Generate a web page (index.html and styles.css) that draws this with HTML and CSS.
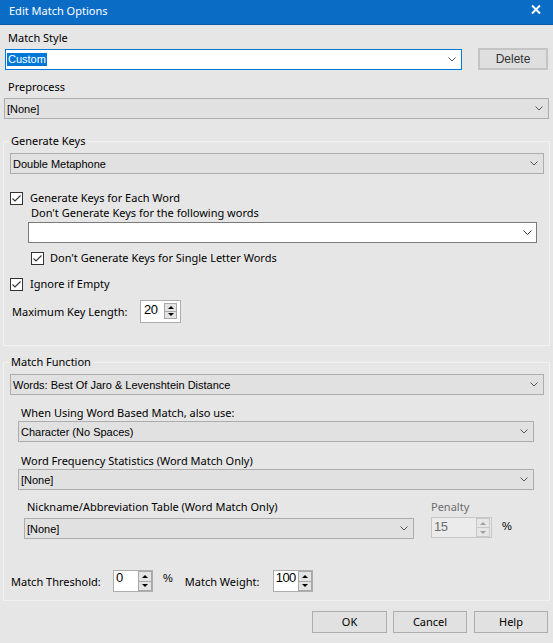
FILE: index.html
```html
<!DOCTYPE html>
<html>
<head>
<meta charset="utf-8">
<title>Edit Match Options</title>
<link rel="stylesheet" href="styles.css">
</head>
<body>
<div class="titlebar">
  <span class="title">Edit Match Options</span>
  <span class="close"><svg width="10" height="9" viewBox="0 0 10 9"><path d="M1 0.5 L9 8.5 M9 0.5 L1 8.5" stroke="#fff" stroke-width="2" fill="none"/></svg></span>
</div>

<div class="lbl lbl-style">Match Style</div>
<div class="style-row">
  <div class="combo combo-custom"><span class="sel-text">Custom</span><span class="chev"><svg width="8" height="5" viewBox="0 0 8 5"><path d="M0.5 0.5 L4 4 L7.5 0.5" fill="none" stroke="#555"/></svg></span></div>
  <div class="btn btn-delete">Delete</div>
</div>

<div class="lbl lbl-pre">Preprocess</div>
<div class="select sel-pre"><span>[None]</span><span class="chev"><svg width="8" height="5" viewBox="0 0 8 5"><path d="M0.5 0.5 L4 4 L7.5 0.5" fill="none" stroke="#555"/></svg></span></div>

<fieldset class="grp grp-keys">
  <legend>Generate Keys</legend>
  <div class="select sel-wide"><span>Double Metaphone</span><span class="chev"><svg width="8" height="5" viewBox="0 0 8 5"><path d="M0.5 0.5 L4 4 L7.5 0.5" fill="none" stroke="#555"/></svg></span></div>

  <div class="cb cb-each"><span class="box"><svg width="11" height="11" viewBox="0 0 11 11"><path d="M1.5 5.5 L4 8 L9.5 2.5" fill="none" stroke="#333" stroke-width="1.1"/></svg></span><span>Generate Keys for Each Word</span></div>
  <div class="lbl lbl-dont">Don't Generate Keys for the following words</div>
  <div class="combo combo-words"><span></span><span class="chev"><svg width="9" height="5" viewBox="0 0 9 5"><path d="M0.5 0.5 L4.5 4.5 L8.5 0.5" fill="none" stroke="#333"/></svg></span></div>
  <div class="cb cb-single"><span class="box"><svg width="11" height="11" viewBox="0 0 11 11"><path d="M1.5 5.5 L4 8 L9.5 2.5" fill="none" stroke="#333" stroke-width="1.1"/></svg></span><span>Don't Generate Keys for Single Letter Words</span></div>
  <div class="cb cb-empty"><span class="box"><svg width="11" height="11" viewBox="0 0 11 11"><path d="M1.5 5.5 L4 8 L9.5 2.5" fill="none" stroke="#333" stroke-width="1.1"/></svg></span><span>Ignore if Empty</span></div>

  <div class="num-row row-maxkey">
    <span class="lbl num-lbl lbl-maxkey">Maximum Key Length:</span>
    <div class="spin spin-maxkey"><span class="spin-val">20</span><span class="arrows"><span class="arr"><i class="tri-up"></i></span><span class="arr"><i class="tri-dn"></i></span></span></div>
  </div>
</fieldset>

<fieldset class="grp grp-match">
  <legend>Match Function</legend>
  <div class="select sel-wide"><span>Words: Best Of Jaro &amp; Levenshtein Distance</span><span class="chev"><svg width="8" height="5" viewBox="0 0 8 5"><path d="M0.5 0.5 L4 4 L7.5 0.5" fill="none" stroke="#555"/></svg></span></div>

  <div class="lbl lbl-sub lbl-when">When Using Word Based Match, also use:</div>
  <div class="select sel-sub"><span>Character (No Spaces)</span><span class="chev"><svg width="8" height="5" viewBox="0 0 8 5"><path d="M0.5 0.5 L4 4 L7.5 0.5" fill="none" stroke="#555"/></svg></span></div>

  <div class="lbl lbl-sub lbl-freq">Word Frequency Statistics (Word Match Only)</div>
  <div class="select sel-sub"><span>[None]</span><span class="chev"><svg width="8" height="5" viewBox="0 0 8 5"><path d="M0.5 0.5 L4 4 L7.5 0.5" fill="none" stroke="#555"/></svg></span></div>

  <div class="nick-row">
    <div class="nick-col">
      <div class="lbl lbl-nick">Nickname/Abbreviation Table (Word Match Only)</div>
      <div class="select sel-nick"><span>[None]</span><span class="chev"><svg width="8" height="5" viewBox="0 0 8 5"><path d="M0.5 0.5 L4 4 L7.5 0.5" fill="none" stroke="#555"/></svg></span></div>
    </div>
    <div class="pen-col">
      <div class="lbl lbl-pen">Penalty</div>
      <div class="pen-line">
        <div class="spin spin-flush spin-pen disabled"><span class="spin-val">15</span><span class="arrows"><span class="arr"><i class="tri-up"></i></span><span class="arr"><i class="tri-dn"></i></span></span></div>
        <span class="pct pct-pen">%</span>
      </div>
    </div>
  </div>

  <div class="num-row row-thresh">
    <span class="lbl num-lbl lbl-thresh">Match Threshold:</span>
    <div class="spin spin-flush spin-40"><span class="spin-val">0</span><span class="arrows"><span class="arr"><i class="tri-up"></i></span><span class="arr"><i class="tri-dn"></i></span></span></div>
    <span class="pct pct-thresh">%</span>
    <span class="lbl num-lbl lbl-weight">Match Weight:</span>
    <div class="spin spin-flush spin-40"><span class="spin-val">100</span><span class="arrows"><span class="arr"><i class="tri-up"></i></span><span class="arr"><i class="tri-dn"></i></span></span></div>
  </div>
</fieldset>

<div class="buttons">
  <div class="btn btn-ok">OK</div>
  <div class="btn btn-cancel">Cancel</div>
  <div class="btn btn-help">Help</div>
</div>
</body>
</html>
```

FILE: styles.css
```css
* { box-sizing: border-box; }
html, body { margin: 0; padding: 0; }
body {
  width: 553px;
  height: 643px;
  overflow: hidden;
  background: #e6e6e6;
  font-family: "Noto Sans", "Open Sans", sans-serif;
  font-size: 11px;
  color: #000;
}

/* title bar */
.titlebar {
  height: 25px;
  background: #0b6cc6;
  border-bottom: 1px solid #0a5aa8;
  display: flex;
  justify-content: space-between;
  align-items: flex-start;
  color: #fff;
}
.title { margin: 3px 0 0 9px; line-height: 16px; }
.close { margin: 5px 12px 0 0; display: flex; }

/* generic */
.lbl { line-height: 16px; height: 16px; white-space: nowrap; }
.chev { display: flex; }
.select, .combo {
  height: 21px;
  display: flex;
  align-items: center;
  justify-content: space-between;
  padding: 0 5px 0 2px;
  font-family: "Liberation Sans", Arial, sans-serif;
  font-size: 11px;
  white-space: nowrap;
}
.select { background: #e1e1e1; border: 1px solid #adadad; }
.combo { background: #fff; border: 1px solid #7a7a7a; }

.btn {
  height: 22px;
  border: 1px solid #adadad;
  background: #e1e1e1;
  display: flex;
  align-items: center;
  justify-content: center;
  line-height: 16px;
}

/* match style */
.lbl-style { margin: 5px 0 0 8px; }
.style-row { display: flex; align-items: flex-start; margin-top: 3px; }
.combo-custom { margin-left: 5px; width: 457px; border-color: #0078d7; padding-left: 1px; }
.sel-text { background: #0078d7; color: #fff; line-height: 13px; padding: 0 1px; }
.btn-delete {
  margin: -1px 0 0 16px;
  width: 70px;
  border: 2px solid #c4c4c4;
  background: #dfdfdf;
  color: #333;
  font-family: "Liberation Sans", Arial, sans-serif;
  font-size: 12px;
}

.lbl-pre { margin: 9px 0 0 8px; }
.sel-pre { margin: 3px 0 0 4px; width: 545px; }

/* group boxes */
.grp {
  margin: 0 0 0 3px;
  padding: 0;
  width: 547px;
  min-width: 0;
  border: 1px solid #f1f1f1;
}
.grp legend {
  margin-left: 5px;
  padding: 0 2px;
  line-height: 16px;
}
.grp-keys { margin-top: 14px; padding-bottom: 22px; }
.grp-match { margin-top: 8px; padding-bottom: 8px; }

.sel-wide { margin: 4px 0 0 6px; width: 534px; }

/* checkboxes */
.cb { display: flex; align-items: center; gap: 6px; height: 16px; line-height: 16px; white-space: nowrap; }
.box {
  width: 13px; height: 13px;
  border: 1px solid #333;
  background: #fff;
  display: flex;
}
.cb-each { margin: 16px 0 0 6px; gap: 7px; }
.lbl-dont { margin: -1px 0 0 27px; }
.combo-words { margin: 1px 0 0 24px; width: 509px; padding-right: 4px; }
.cb-single { margin: 7px 0 0 27px; }
.cb-empty { margin: 10px 0 0 6px; gap: 7px; }

/* number rows */
.num-row { display: flex; align-items: flex-start; }
.num-lbl { margin-top: 4px; }
.row-maxkey { margin: 8px 0 0 8px; }
.lbl-maxkey { width: 128px; }

.spin {
  display: flex;
  align-items: flex-start;
  background: #fff;
  border: 1px solid #adadad;
}
.spin-val {
  flex: 1;
  font-family: "Liberation Sans", Arial, sans-serif;
  font-size: 13px;
  letter-spacing: -0.6px;
  line-height: 12px;
  padding-left: 2px;
}
.arrows { display: flex; flex-direction: column; width: 14px; }
.arr {
  flex: 1;
  border: 1px solid #a8a8a8;
  background: #e3e3e3;
  display: flex;
  align-items: center;
  justify-content: center;
}
.arr + .arr { border-top: 0; }
.tri-up { width: 0; height: 0; border-left: 3px solid transparent; border-right: 3px solid transparent; border-bottom: 3px solid #000; }
.tri-dn { width: 0; height: 0; border-left: 3px solid transparent; border-right: 3px solid transparent; border-top: 3px solid #000; }

.spin-maxkey { width: 41px; height: 23px; padding: 2px 3px 2px 1px; }
.spin-maxkey .spin-val { padding-top: 1px; }
.spin-maxkey .arrows { height: 16px; width: 13px; }

.spin-flush { height: 22px; }
.spin-flush .arrows { align-self: stretch; }
.spin-flush .spin-val { padding: 1px 0 0 2px; }
.spin-40 { width: 40px; }

.spin-pen { width: 61px; height: 21px; padding-right: 1px; }
.spin-pen .spin-val { padding-top: 3px; }
.disabled { background: #ebebeb; border-color: #c6c6c6; color: #6d6d6d; }
.disabled .arr { border-color: #c8c8c8; background: #e6e6e6; }
.disabled .tri-up { border-bottom-color: #a0a0a0; }
.disabled .tri-dn { border-top-color: #a0a0a0; }

.pct {
  font-family: "Liberation Sans", Arial, sans-serif;
  font-size: 11px;
  line-height: 12px;
}

/* match function group */
.lbl-sub { margin-left: 17px; }
.lbl-when { margin-top: 10px; }
.lbl-freq { margin-top: 11px; }
.sel-sub { margin-left: 14px; width: 516px; }

.nick-row { display: flex; align-items: flex-start; margin-top: 9px; }
.nick-col { margin-left: 20px; width: 390px; }
.lbl-nick { padding-left: 3px; }
.sel-nick { margin-top: 3px; width: 390px; }
.pen-col { margin-left: 17px; }
.lbl-pen { color: #6d6d6d; }
.pen-line { display: flex; align-items: flex-start; margin-top: 2px; }
.pct-pen { margin: 3px 0 0 10px; }

.row-thresh { margin: 31px 0 0 7px; }
.lbl-thresh { width: 102px; }
.pct-thresh { margin: 2px 0 0 10px; }
.lbl-weight { margin-left: 12px; width: 88px; }

/* bottom buttons */
.buttons { display: flex; justify-content: flex-end; margin-top: 10px; padding-right: 5px; }
.btn-ok { width: 75px; }
.btn-cancel { width: 74px; margin-left: 6px; }
.btn-help { width: 74px; margin-left: 7px; }
```
